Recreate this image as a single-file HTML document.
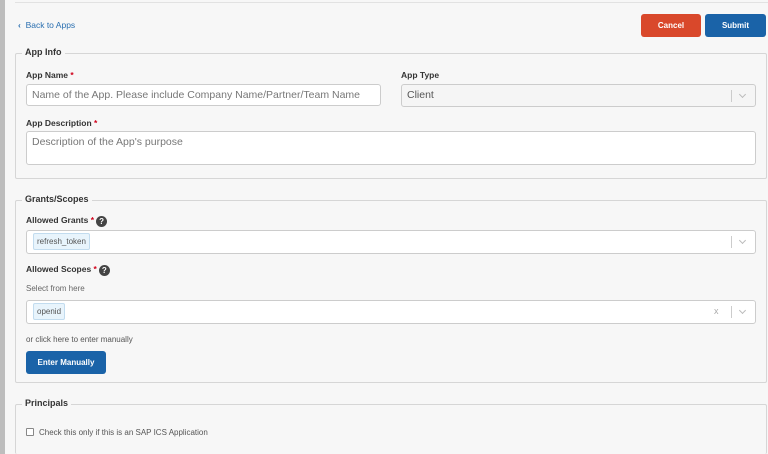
<!DOCTYPE html>
<html style="overflow:hidden;height:454px"><head><meta charset="utf-8"><style>
*{box-sizing:border-box;margin:0;padding:0}
body{width:768px;height:454px;overflow:hidden;background:#f7f7f7;font-family:"Liberation Sans",sans-serif;position:relative;color:#333}
.a{position:absolute}
.fs{position:absolute;border:1px solid #d6d6d6;border-radius:2px}
.lg{position:absolute;background:#f7f7f7;padding:0 3px;font-size:9px;font-weight:bold;color:#333;line-height:11px}
.lb{position:absolute;font-size:8.5px;font-weight:bold;color:#333;line-height:10px}
.lb i{color:#d0021b;font-style:normal}
.in{position:absolute;background:#fff;border:1px solid #ccc;border-radius:3px;font-size:10.5px;color:#777;padding-left:5px}
.tag{position:absolute;background:#e8f4fc;border:1px solid #c2dcef;border-radius:2px;font-size:8px;color:#555;line-height:15px;padding:0 3px}
.sep{position:absolute;width:1px;height:12px;background:#ccc}
.chev{position:absolute;width:5px;height:5px;border-right:1px solid #bbb;border-bottom:1px solid #bbb;transform:rotate(45deg)}
.q{display:inline-block;width:11px;height:11px;border-radius:50%;background:#444;color:#fff;font-size:8px;text-align:center;line-height:11px;vertical-align:-1px;margin-left:2px}
.btn{position:absolute;color:#fff;font-size:8px;font-weight:bold;text-align:center;border-radius:3px}
</style></head><body>
<div class="a" style="left:0;top:0;width:5px;height:454px;background:#bdbdbd"></div>
<div class="a" style="left:15px;top:2px;width:753px;height:1px;background:#e2e2e2"></div>
<div class="a" style="left:18px;top:20px;font-size:8.5px;color:#2a6fb0;line-height:10px"><b>&#8249;</b>&nbsp; Back to Apps</div>
<div class="btn" style="left:641px;top:14px;width:60px;height:23px;line-height:23px;background:#d9482b">Cancel</div>
<div class="btn" style="left:705px;top:14px;width:61px;height:23px;line-height:23px;background:#1a63a8">Submit</div>

<div class="fs" style="left:15px;top:53px;width:752px;height:126px"></div>
<div class="lg" style="left:22px;top:47px">App Info</div>
<div class="lb" style="left:26px;top:70px">App Name <i>*</i></div>
<div class="in" style="left:26px;top:84px;width:355px;height:22px;line-height:20px">Name of the App. Please include Company Name/Partner/Team Name</div>
<div class="lb" style="left:401px;top:70px">App Type</div>
<div class="in" style="left:401px;top:84px;width:355px;height:23px;line-height:21px;background:#f5f5f5;color:#555">Client</div>
<div class="sep" style="left:731px;top:90px"></div><div class="chev" style="left:740px;top:92px"></div>
<div class="lb" style="left:26px;top:118px">App Description <i>*</i></div>
<div class="in" style="left:26px;top:131px;width:730px;height:34px;line-height:20px">Description of the App's purpose</div>

<div class="fs" style="left:15px;top:200px;width:752px;height:183px"></div>
<div class="lg" style="left:22px;top:194px">Grants/Scopes</div>
<div class="lb" style="left:26px;top:215px">Allowed Grants <i>*</i><span class="q">?</span></div>
<div class="in" style="left:26px;top:230px;width:730px;height:24px"></div>
<div class="tag" style="left:33px;top:233px">refresh_token</div>
<div class="sep" style="left:731px;top:236px"></div><div class="chev" style="left:740px;top:238px"></div>
<div class="lb" style="left:26px;top:264px">Allowed Scopes <i>*</i><span class="q">?</span></div>
<div class="a" style="left:26px;top:284px;font-size:8px;color:#666">Select from here</div>
<div class="in" style="left:26px;top:300px;width:730px;height:24px"></div>
<div class="tag" style="left:33px;top:303px">openid</div>
<div class="a" style="left:714px;top:306px;font-size:9px;color:#aaa">x</div>
<div class="sep" style="left:731px;top:306px"></div><div class="chev" style="left:740px;top:308px"></div>
<div class="a" style="left:26px;top:335px;font-size:8px;color:#555">or click here to enter manually</div>
<div class="btn" style="left:26px;top:351px;width:80px;height:23px;line-height:23px;background:#1a63a8">Enter Manually</div>

<div class="fs" style="left:15px;top:404px;width:752px;height:50px;border-bottom:none"></div>
<div class="lg" style="left:22px;top:398px">Principals</div>
<div class="a" style="left:26px;top:428px;width:8px;height:8px;border:1px solid #888;border-radius:1px;background:#fff"></div>
<div class="a" style="left:39px;top:428px;font-size:8px;color:#555">Check this only if this is an SAP ICS Application</div>
</body></html>
